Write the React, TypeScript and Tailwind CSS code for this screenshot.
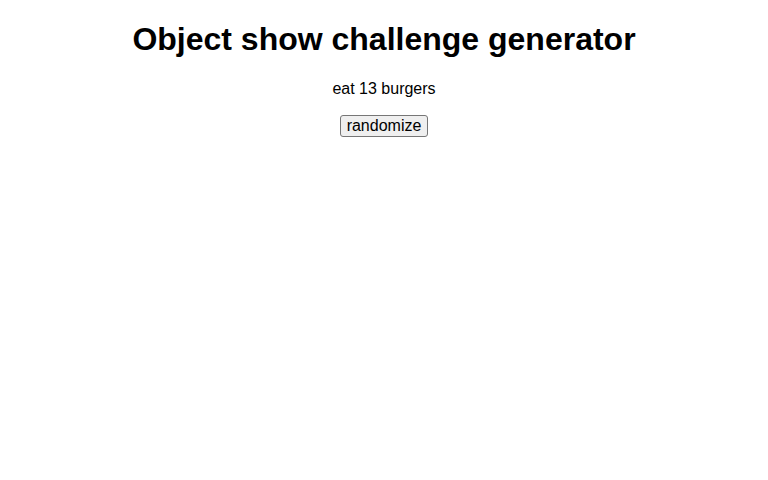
import React, { useState } from "react";

const challenges = ["eat 13 burgers"];

export default function App() {
  const [c] = useState(challenges[0]);
  return (
    <div className="text-center text-black bg-white" style={{ fontFamily: '"Liberation Sans", Arial, sans-serif' }}>
      <h1 className="text-[32px] font-bold leading-[normal] my-[21.44px]">Object show challenge generator</h1>
      <p className="text-base leading-[normal] my-4">{c}</p>
      <button className="text-base leading-[normal] px-[6px] py-[1px] border border-[#767676] rounded-[3px] bg-[#efefef] text-black">
        randomize
      </button>
    </div>
  );
}
